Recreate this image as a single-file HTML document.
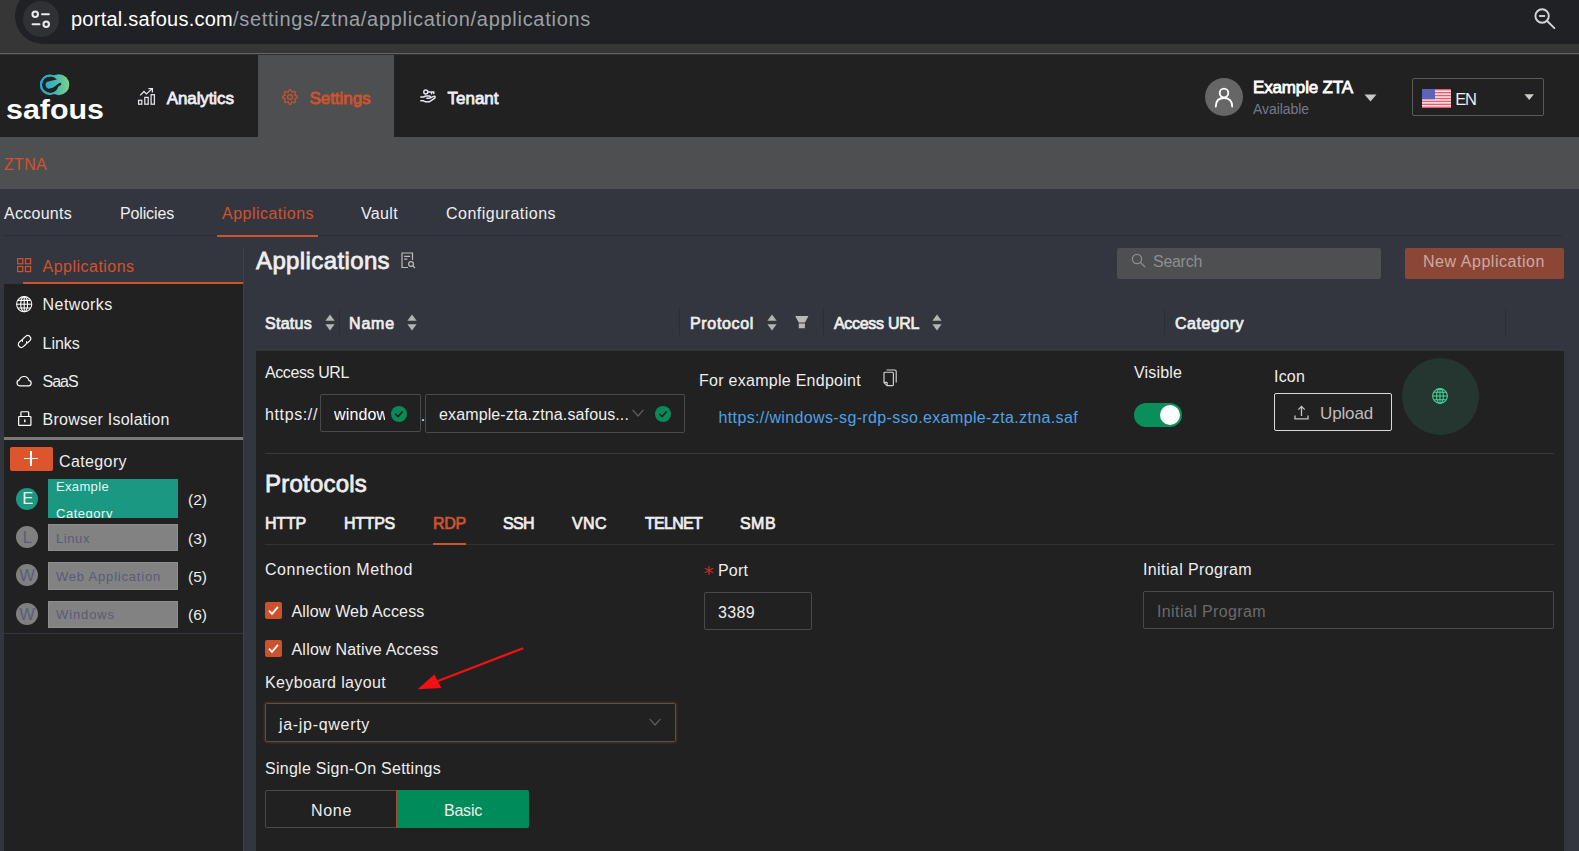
<!DOCTYPE html>
<html lang="en"><head><meta charset="utf-8"><title>Safous - Applications</title>
<style>
html,body{margin:0;padding:0;}
body{width:1579px;height:851px;overflow:hidden;background:#33363f;position:relative;font-family:"Liberation Sans",sans-serif;color:#fff;}
.t{position:absolute;white-space:nowrap;}
.b{position:absolute;box-sizing:border-box;}
svg{position:absolute;overflow:visible;}
</style></head><body>
<div class="b" style="left:0px;top:0px;width:1579px;height:54px;background:#363637;"></div>
<div class="b" style="left:15px;top:-12.4px;width:1700px;height:56px;background:#202124;border-radius:28px;"></div>
<div class="b" style="left:0px;top:53px;width:1579px;height:1px;background:#646464;"></div>
<div class="b" style="left:22.5px;top:1px;width:36px;height:36px;background:#303134;border-radius:50%;"></div>
<svg style="left:29.5px;top:7.5px" width="23" height="23" viewBox="0 0 22 22" fill="none" stroke="#e8eaed" stroke-width="2" stroke-linecap="round"><circle cx="5" cy="6" r="2.6"/><line x1="11.5" y1="6" x2="18" y2="6"/><circle cx="15.5" cy="15.5" r="2.6"/><line x1="2.5" y1="15.5" x2="9" y2="15.5"/></svg>
<span class="t" style="left:71px;top:5px;font-size:20px;line-height:28px;color:#fff;letter-spacing:0.244px;">portal.safous.com</span>
<span class="t" style="left:233px;top:5px;font-size:20px;line-height:28px;color:#9aa0a6;letter-spacing:0.713px;">/settings/ztna/application/applications</span>
<svg style="left:1534px;top:8px" width="22" height="22" viewBox="0 0 22 22" fill="none" stroke="#d4d5d8" stroke-width="1.9"><circle cx="8.1" cy="8" r="6.7"/><line x1="12.9" y1="12.8" x2="20.4" y2="20.1" stroke-linecap="round"/><line x1="5.1" y1="8" x2="11.1" y2="8"/></svg>
<div class="b" style="left:0px;top:54px;width:1579px;height:83px;background:#212121;"></div>
<div class="b" style="left:0px;top:54px;width:1579px;height:1px;background:#2f2f2f;"></div>
<div class="b" style="left:258px;top:55px;width:136px;height:82px;background:#4e4f51;"></div>
<svg style="left:38px;top:72px" width="34" height="26" viewBox="0 0 34 26"><defs><linearGradient id="lg" gradientUnits="userSpaceOnUse" x1="3" y1="0" x2="31" y2="0"><stop offset="0" stop-color="#1fa6d2"/><stop offset="0.45" stop-color="#3db6b4"/><stop offset="1" stop-color="#82d088"/></linearGradient></defs><circle cx="20.8" cy="12.7" r="10.5" fill="url(#lg)"/><circle cx="12.2" cy="12.7" r="9.3" fill="#212121" stroke="url(#lg)" stroke-width="2"/><path d="M11.2 13 L20.5 10.8" stroke="url(#lg)" stroke-width="7.2" stroke-linecap="round"/><path d="M10.4 18.2 C15.2 19.6 17.6 14.2 22 12.1" fill="none" stroke="#212121" stroke-width="2.5" stroke-linecap="round"/><path d="M12.2 22 A9.3 9.3 0 0 1 12.2 3.4" fill="none" stroke="url(#lg)" stroke-width="2"/></svg>
<span class="t" style="left:5.9px;top:91.7px;font-size:27px;line-height:36px;color:#fff;font-weight:700;transform:scaleX(1.125);transform-origin:0 50%;">safous</span>
<svg style="left:138px;top:88px" width="17" height="17" viewBox="0 0 17 17" fill="none" stroke="#e6e6ee" stroke-width="1.25"><rect x="0.6" y="12.3" width="3.2" height="3.9"/><rect x="6.8" y="9.4" width="3.4" height="6.8"/><rect x="13.1" y="6.7" width="3.3" height="9.5"/><path d="M2.2 7.4 L6 3.5 L8.4 6 L14 0.9 M10.4 0.7 H14.4 V4.6"/></svg>
<span class="t" style="left:166.8px;top:86.5px;font-size:17px;line-height:24px;color:#eeeef6;-webkit-text-stroke:0.77px #eeeef6;letter-spacing:-0.114px;">Analytics</span>
<svg style="left:282px;top:89px" width="16" height="16" viewBox="0 0 24 24" fill="none" stroke="#cf532e" stroke-width="1.8" stroke-linejoin="round"><circle cx="12" cy="12" r="3.6"/><path d="M19.4 15a1.65 1.65 0 0 0 .33 1.82l.06.06a2 2 0 1 1-2.83 2.83l-.06-.06a1.65 1.65 0 0 0-1.82-.33 1.65 1.65 0 0 0-1 1.51V21a2 2 0 1 1-4 0v-.09A1.65 1.65 0 0 0 9 19.4a1.65 1.65 0 0 0-1.82.33l-.06.06a2 2 0 1 1-2.83-2.83l.06-.06a1.65 1.65 0 0 0 .33-1.82 1.65 1.65 0 0 0-1.51-1H3a2 2 0 1 1 0-4h.09A1.65 1.65 0 0 0 4.6 9a1.65 1.65 0 0 0-.33-1.82l-.06-.06a2 2 0 1 1 2.83-2.83l.06.06a1.65 1.65 0 0 0 1.82.33H9a1.65 1.65 0 0 0 1-1.51V3a2 2 0 1 1 4 0v.09a1.65 1.65 0 0 0 1 1.51 1.65 1.65 0 0 0 1.82-.33l.06-.06a2 2 0 1 1 2.83 2.83l-.06.06a1.65 1.65 0 0 0-.33 1.82V9a1.65 1.65 0 0 0 1.51 1H21a2 2 0 1 1 0 4h-.09a1.65 1.65 0 0 0-1.51 1z"/></svg>
<span class="t" style="left:309.5px;top:86.5px;font-size:17px;line-height:24px;color:#cf532e;-webkit-text-stroke:0.77px #cf532e;letter-spacing:-0.053px;">Settings</span>
<svg style="left:419.5px;top:88.5px" width="16" height="16" viewBox="0 0 16 16" fill="none" stroke="#e6e6ee" stroke-width="1.45" stroke-linecap="round" stroke-linejoin="round"><circle cx="5.8" cy="3" r="2"/><path d="M7.8 3 H14 M11.6 3 V4.8 M13.8 3 V4.6"/><path d="M0.8 8 H3.6 L5.8 7 H9.4 C10.7 7 10.7 9.2 9.4 9.2 H6.8 M9.8 9 L13.8 7.4 C15.2 7 15.7 8.6 14.5 9.3 L9.2 12.8 H5.4 L3.6 11.8 H0.8"/></svg>
<span class="t" style="left:447.5px;top:86.5px;font-size:17px;line-height:24px;color:#eeeef6;-webkit-text-stroke:0.77px #eeeef6;letter-spacing:-0.007px;">Tenant</span>
<div class="b" style="left:1205.3px;top:78px;width:38px;height:38px;background:#666666;border-radius:50%;"></div>
<svg style="left:1213.3px;top:86px" width="22" height="22" viewBox="0 0 22 22" fill="none" stroke="#fff" stroke-width="1.8" stroke-linecap="round"><circle cx="11" cy="7" r="4.3"/><path d="M2.8 20.5 C2.8 14.5 6.5 12 11 12 C15.5 12 19.2 14.5 19.2 20.5"/></svg>
<span class="t" style="left:1253px;top:76px;font-size:17px;line-height:24px;color:#fff;-webkit-text-stroke:0.77px #fff;letter-spacing:-0.156px;">Example ZTA</span>
<span class="t" style="left:1253px;top:99px;font-size:14px;line-height:20px;color:#77778c;letter-spacing:-0.063px;">Available</span>
<svg style="left:1364px;top:94px" width="13" height="8" viewBox="0 0 13 8"><path d="M0.5 0.5 H12.5 L6.5 7.5 Z" fill="#c8c8c8"/></svg>
<div class="b" style="left:1412px;top:78px;width:132px;height:38px;border:1px solid #5a5a5a;border-radius:2px;"></div>
<svg style="left:1422px;top:88.5px" width="29" height="19" viewBox="0 0 29 19"><rect width="29" height="19" rx="1.5" fill="#f2f2f2"/><rect y="0" width="29" height="1.46154" fill="#f2566a"/><rect y="2.92308" width="29" height="1.46154" fill="#f2566a"/><rect y="5.84615" width="29" height="1.46154" fill="#f2566a"/><rect y="8.76923" width="29" height="1.46154" fill="#f2566a"/><rect y="11.6923" width="29" height="1.46154" fill="#f2566a"/><rect y="14.6154" width="29" height="1.46154" fill="#f2566a"/><rect y="17.5385" width="29" height="1.46154" fill="#f2566a"/><rect width="13" height="10.3" fill="#5f63b4"/></svg>
<span class="t" style="left:1455.2px;top:87.5px;font-size:16.5px;line-height:23px;color:#f0f0f0;letter-spacing:-1.211px;">EN</span>
<svg style="left:1524px;top:94px" width="10.4" height="6.4" viewBox="0 0 11 7"><path d="M0.3 0.3 H10.7 L5.5 6.7 Z" fill="#cfccc6"/></svg>
<div class="b" style="left:0px;top:137px;width:1579px;height:52px;background:#4e4f51;"></div>
<span class="t" style="left:4px;top:154px;font-size:16px;line-height:22px;color:#cf532e;letter-spacing:0.306px;">ZTNA</span>
<div class="b" style="left:4px;top:235px;width:1558px;height:1px;background:#2a2c33;"></div>
<span class="t" style="left:4px;top:203px;font-size:16px;line-height:22px;color:#eeeeee;letter-spacing:0.273px;">Accounts</span>
<span class="t" style="left:120px;top:203px;font-size:16px;line-height:22px;color:#eeeeee;letter-spacing:-0.142px;">Policies</span>
<span class="t" style="left:222px;top:203px;font-size:16px;line-height:22px;color:#cf532e;letter-spacing:0.477px;">Applications</span>
<span class="t" style="left:361px;top:203px;font-size:16px;line-height:22px;color:#eeeeee;letter-spacing:0.344px;">Vault</span>
<span class="t" style="left:446px;top:203px;font-size:16px;line-height:22px;color:#eeeeee;letter-spacing:0.488px;">Configurations</span>
<div class="b" style="left:217px;top:235px;width:101px;height:2px;background:#cf532e;"></div>
<div class="b" style="left:243px;top:248px;width:1px;height:700px;background:#3f4147;"></div>
<div class="b" style="left:4px;top:284px;width:239px;height:600px;background:#212121;"></div>
<div class="b" style="left:23px;top:282px;width:220px;height:2px;background:#cf532e;"></div>
<svg style="left:17.1px;top:258px" width="14.3" height="14.3" viewBox="0 0 14.3 14.3" fill="none" stroke="#cf532e" stroke-width="1.25"><rect x="0.65" y="0.65" width="5.1" height="5.1"/><rect x="8.5" y="0.65" width="5.1" height="5.1"/><rect x="0.65" y="8.5" width="5.1" height="5.1"/><rect x="8.5" y="8.5" width="5.1" height="5.1"/></svg>
<span class="t" style="left:42.6px;top:256px;font-size:16px;line-height:22px;color:#cf532e;letter-spacing:0.477px;">Applications</span>
<svg style="left:15.9px;top:295.6px" width="16.4" height="16.4" viewBox="0 0 16 16" fill="none" stroke="#fff" stroke-width="1.05"><circle cx="8" cy="8" r="7.4"/><ellipse cx="8" cy="8" rx="3.4" ry="7.4"/><line x1="8" y1="0.6" x2="8" y2="15.4"/><line x1="0.6" y1="8" x2="15.4" y2="8"/><path d="M1.6 4.3 H14.4 M1.6 11.7 H14.4"/></svg>
<span class="t" style="left:42.6px;top:294px;font-size:16px;line-height:22px;color:#eeeeee;letter-spacing:0.415px;">Networks</span>
<svg style="left:17px;top:333.8px" width="15" height="15" viewBox="0 0 15 15" fill="none" stroke="#fff" stroke-width="1.15" stroke-linecap="round"><g transform="rotate(-42 7.5 7.5)"><path d="M6.4 4.5 H3.2 a3 3 0 0 0 0 6 H6.4 a3 3 0 0 0 2.6-1.5"/><path d="M8.6 10.5 H11.8 a3 3 0 0 0 0-6 H8.6 a3 3 0 0 0-2.6 1.5"/></g></svg>
<span class="t" style="left:42.6px;top:333px;font-size:16px;line-height:22px;color:#eeeeee;letter-spacing:-0.070px;">Links</span>
<svg style="left:16.2px;top:374.8px" width="16.4" height="11.6" viewBox="0 0 17 12" fill="none" stroke="#fff" stroke-width="1.2" stroke-linejoin="round"><path d="M4 11.3 a3.2 3.2 0 0 1-0.5-6.3 a5.1 5.1 0 0 1 9.8 0.5 a2.95 2.95 0 0 1 0.1 5.8 z"/></svg>
<span class="t" style="left:42.6px;top:371px;font-size:16px;line-height:22px;color:#eeeeee;letter-spacing:-1.036px;">SaaS</span>
<svg style="left:17.6px;top:411.2px" width="13.6" height="15.2" viewBox="0 0 14 15.5" fill="none" stroke="#fff" stroke-width="1.25"><rect x="0.7" y="5.6" width="12.6" height="9.2" rx="0.6"/><path d="M3 5.6 V1.6 a0.9 0.9 0 0 1 0.9-0.9 H10.1 a0.9 0.9 0 0 1 0.9 0.9 V5.6"/><line x1="7" y1="8.6" x2="7" y2="11.6" stroke-width="1.5"/></svg>
<span class="t" style="left:42.6px;top:409px;font-size:16px;line-height:22px;color:#eeeeee;letter-spacing:0.252px;">Browser Isolation</span>
<div class="b" style="left:4px;top:437px;width:239px;height:3px;background:#7a7a7a;"></div>
<div class="b" style="left:10px;top:447px;width:43px;height:23.6px;background:#dd552d;border-radius:2px;"></div>
<div class="b" style="left:24px;top:457.5px;width:14px;height:1.6px;background:#fff;"></div>
<div class="b" style="left:30.2px;top:451px;width:1.6px;height:14.6px;background:#fff;"></div>
<span class="t" style="left:59px;top:451px;font-size:16px;line-height:22px;color:#eeeeee;letter-spacing:0.385px;">Category</span>
<div class="b" style="left:16px;top:487.7px;width:22px;height:22px;background:#1a9882;border-radius:50%;"></div>
<span class="t" style="left:22.2px;top:487px;font-size:16.5px;line-height:23px;color:#eeeeee;">E</span>
<div class="b" style="left:47.5px;top:479px;width:130px;height:39px;background:#1a9882;overflow:hidden;"></div>
<span class="t" style="left:56px;top:478px;font-size:13px;line-height:18px;color:#e8f6f2;letter-spacing:0.346px;">Example</span>
<span class="t" style="left:56px;top:505px;font-size:13px;line-height:18px;color:#e8f6f2;letter-spacing:0.531px;">Category</span>
<div class="b" style="left:47px;top:518px;width:132px;height:3px;background:#212121;"></div>
<span class="t" style="left:188px;top:489px;font-size:15.5px;line-height:22px;color:#eeeeee;letter-spacing:0.018px;">(2)</span>
<div class="b" style="left:16px;top:526.2px;width:22px;height:22px;background:#808080;border-radius:50%;"></div>
<span class="t" style="left:22.7px;top:526px;font-size:16.5px;line-height:23px;color:#5c5c78;">L</span>
<div class="b" style="left:47.5px;top:523.5px;width:130px;height:27px;background:#828282;border:1px solid #8e8e8e;"></div>
<span class="t" style="left:56px;top:529.5px;font-size:13px;line-height:18px;color:#5a5a7a;letter-spacing:0.584px;">Linux</span>
<span class="t" style="left:188px;top:528px;font-size:15.5px;line-height:22px;color:#eeeeee;letter-spacing:0.018px;">(3)</span>
<div class="b" style="left:16px;top:563.8px;width:22px;height:22px;background:#808080;border-radius:50%;"></div>
<span class="t" style="left:19.3px;top:563.6px;font-size:16.5px;line-height:23px;color:#5c5c78;">W</span>
<div class="b" style="left:47.5px;top:561.5px;width:130px;height:28px;background:#828282;border:1px solid #8e8e8e;"></div>
<span class="t" style="left:56px;top:567.5px;font-size:13px;line-height:18px;color:#5a5a7a;letter-spacing:0.801px;">Web Application</span>
<span class="t" style="left:188px;top:565.5px;font-size:15.5px;line-height:22px;color:#eeeeee;letter-spacing:0.018px;">(5)</span>
<div class="b" style="left:16px;top:603px;width:22px;height:22px;background:#808080;border-radius:50%;"></div>
<span class="t" style="left:19.3px;top:602.8px;font-size:16.5px;line-height:23px;color:#5c5c78;">W</span>
<div class="b" style="left:47.5px;top:600.5px;width:130px;height:27px;background:#828282;border:1px solid #8e8e8e;"></div>
<span class="t" style="left:56px;top:606px;font-size:13px;line-height:18px;color:#5a5a7a;letter-spacing:0.895px;">Windows</span>
<span class="t" style="left:188px;top:604px;font-size:15.5px;line-height:22px;color:#eeeeee;letter-spacing:0.018px;">(6)</span>
<div class="b" style="left:4px;top:633px;width:239px;height:1px;background:#35373e;"></div>
<span class="t" style="left:256px;top:244px;font-size:24px;line-height:34px;color:#eeeeee;-webkit-text-stroke:0.77px #eeeeee;letter-spacing:0.382px;">Applications</span>
<svg style="left:401px;top:252px" width="15" height="17" viewBox="0 0 15 17" fill="none" stroke="#bdbdbd" stroke-width="1.2"><path d="M11.5 8 V1 H1 V15.5 H7"/><path d="M3.2 4.3 H9.2 M3.2 7.2 H6.3"/><circle cx="10" cy="12" r="2.4"/><path d="M11.8 13.8 L14 16"/></svg>
<div class="b" style="left:1117px;top:248px;width:264px;height:31px;background:#4e4f51;border-radius:2px;"></div>
<svg style="left:1131px;top:253px" width="15" height="15" viewBox="0 0 15 15" fill="none" stroke="#8d8e90" stroke-width="1.3"><circle cx="6" cy="6" r="4.6"/><path d="M9.5 9.5 L14 14"/></svg>
<span class="t" style="left:1153px;top:251px;font-size:16px;line-height:22px;color:#8d8e90;letter-spacing:-0.283px;">Search</span>
<div class="b" style="left:1405px;top:248px;width:159px;height:31px;background:#8c4636;border-radius:2px;"></div>
<span class="t" style="left:1423px;top:251px;font-size:16px;line-height:22px;color:#cdaaa0;letter-spacing:0.544px;">New Application</span>
<span class="t" style="left:265px;top:313px;font-size:16px;line-height:22px;color:#eeeeee;-webkit-text-stroke:0.72px #eeeeee;letter-spacing:0.273px;">Status</span>
<svg style="left:325px;top:314px" width="10" height="17" viewBox="0 0 10 17"><path d="M5 0.5 L9.6 6.8 H0.4 Z M5 16.5 L9.6 10.2 H0.4 Z" fill="#b4b4b4"/></svg>
<div class="b" style="left:339px;top:309px;width:1px;height:26px;background:#2b2d34;"></div>
<span class="t" style="left:349px;top:313px;font-size:16px;line-height:22px;color:#eeeeee;-webkit-text-stroke:0.72px #eeeeee;letter-spacing:0.830px;">Name</span>
<svg style="left:407px;top:314px" width="10" height="17" viewBox="0 0 10 17"><path d="M5 0.5 L9.6 6.8 H0.4 Z M5 16.5 L9.6 10.2 H0.4 Z" fill="#b4b4b4"/></svg>
<div class="b" style="left:679px;top:309px;width:1px;height:26px;background:#2b2d34;"></div>
<span class="t" style="left:690px;top:313px;font-size:16px;line-height:22px;color:#eeeeee;-webkit-text-stroke:0.72px #eeeeee;letter-spacing:0.663px;">Protocol</span>
<svg style="left:767px;top:314px" width="10" height="17" viewBox="0 0 10 17"><path d="M5 0.5 L9.6 6.8 H0.4 Z M5 16.5 L9.6 10.2 H0.4 Z" fill="#b4b4b4"/></svg>
<svg style="left:795.4px;top:316.2px" width="13.7" height="12.4" viewBox="0 0 13.7 12.4"><path d="M0.2 0 H13.5 L10 6.4 H3.7 Z M3.8 7.5 H9.9 V12.2 H3.8 Z" fill="#b9b9b9"/></svg>
<div class="b" style="left:823px;top:309px;width:1px;height:26px;background:#2b2d34;"></div>
<span class="t" style="left:834px;top:313px;font-size:16px;line-height:22px;color:#eeeeee;-webkit-text-stroke:0.72px #eeeeee;letter-spacing:-0.303px;">Access URL</span>
<svg style="left:932px;top:314px" width="10" height="17" viewBox="0 0 10 17"><path d="M5 0.5 L9.6 6.8 H0.4 Z M5 16.5 L9.6 10.2 H0.4 Z" fill="#b4b4b4"/></svg>
<div class="b" style="left:1164px;top:309px;width:1px;height:26px;background:#2b2d34;"></div>
<span class="t" style="left:1175px;top:313px;font-size:16px;line-height:22px;color:#eeeeee;-webkit-text-stroke:0.72px #eeeeee;letter-spacing:0.510px;">Category</span>
<div class="b" style="left:1505px;top:309px;width:1px;height:26px;background:#2b2d34;"></div>
<div class="b" style="left:256px;top:351px;width:1308px;height:520px;background:#212121;"></div>
<span class="t" style="left:265px;top:362px;font-size:16px;line-height:22px;color:#eeeeee;letter-spacing:-0.403px;">Access URL</span>
<span class="t" style="left:265px;top:404px;font-size:16px;line-height:22px;color:#eeeeee;letter-spacing:0.622px;">https://</span>
<div class="b" style="left:320px;top:394px;width:101px;height:38px;border:1px solid #4a4a4a;border-radius:2px;overflow:hidden;"></div>
<div class="b" style="left:334px;top:396px;width:51px;height:34px;overflow:hidden;"><span class="t" style="left:0;top:8px;font-size:16px;line-height:22px;letter-spacing:0.15px">windows-sg</span></div>
<svg style="left:390.5px;top:405.5px" width="16" height="16" viewBox="0 0 16 16"><circle cx="8" cy="8" r="8" fill="#0a8a58"/><path d="M4.6 8.2 L7 10.6 L11.4 5.8" fill="none" stroke="#212121" stroke-width="1.6" stroke-linecap="round" stroke-linejoin="round"/></svg>
<span class="t" style="left:420.7px;top:405px;font-size:16px;line-height:22px;color:#eeeeee;">.</span>
<div class="b" style="left:425px;top:394px;width:260px;height:39px;border:1px solid #4a4a4a;border-radius:2px;"></div>
<span class="t" style="left:439px;top:404px;font-size:16px;line-height:22px;color:#eeeeee;letter-spacing:0.125px;">example-zta.ztna.safous...</span>
<svg style="left:632px;top:409px" width="12" height="8" viewBox="0 0 12 8" fill="none" stroke="#5f5f5f" stroke-width="1.2"><path d="M0.6 0.8 L6 7 L11.4 0.8"/></svg>
<svg style="left:655px;top:405.5px" width="16" height="16" viewBox="0 0 16 16"><circle cx="8" cy="8" r="8" fill="#0a8a58"/><path d="M4.6 8.2 L7 10.6 L11.4 5.8" fill="none" stroke="#212121" stroke-width="1.6" stroke-linecap="round" stroke-linejoin="round"/></svg>
<span class="t" style="left:699px;top:370px;font-size:16px;line-height:22px;color:#eeeeee;letter-spacing:0.273px;">For example Endpoint</span>
<svg style="left:882.5px;top:368.5px" width="14" height="18" viewBox="0 0 14 18" fill="none" stroke="#d2d2d2" stroke-width="1.15" stroke-linejoin="round"><path d="M3.6 1 H11.8 a1.4 1.4 0 0 1 1.4 1.4 V13.6"/><path d="M1 4.2 a1 1 0 0 1 1-1 H9.4 a1 1 0 0 1 1 1 V15.6 a1 1 0 0 1-1 1 H4 L1 13.6 Z"/><path d="M1 13.4 H3.4 a0.8 0.8 0 0 1 0.8 0.8 V16.6"/></svg>
<span class="t" style="left:718.5px;top:407px;font-size:16px;line-height:22px;color:#4ea2e6;letter-spacing:0.365px;">https://windows-sg-rdp-sso.example-zta.ztna.saf</span>
<span class="t" style="left:1134px;top:362px;font-size:16px;line-height:22px;color:#eeeeee;letter-spacing:0.165px;">Visible</span>
<div class="b" style="left:1134px;top:403px;width:48px;height:24px;background:#0a8f5b;border-radius:12px;"></div>
<div class="b" style="left:1159.5px;top:405px;width:20px;height:20px;background:#fff;border-radius:50%;"></div>
<span class="t" style="left:1274px;top:366px;font-size:16px;line-height:22px;color:#eeeeee;letter-spacing:0.189px;">Icon</span>
<div class="b" style="left:1274px;top:393px;width:118px;height:38px;border:1px solid #d9d9d9;border-radius:2px;"></div>
<svg style="left:1294px;top:405px" width="15" height="15" viewBox="0 0 15 15" fill="none" stroke="#c4c4c4" stroke-width="1.3"><path d="M1 10.5 V13.8 H14 V10.5"/><path d="M7.5 11 V1.5 M4.3 4.6 L7.5 1.4 L10.7 4.6"/></svg>
<span class="t" style="left:1320px;top:402px;font-size:17px;line-height:24px;color:#bdbdbd;letter-spacing:-0.146px;">Upload</span>
<div class="b" style="left:1401.5px;top:358px;width:77px;height:77px;background:#25352f;border-radius:50%;"></div>
<svg style="left:1432.1px;top:388.4px" width="16" height="16" viewBox="0 0 16 16" fill="none" stroke="#46d49c" stroke-width="1.05"><circle cx="8" cy="8" r="7.4"/><ellipse cx="8" cy="8" rx="3.4" ry="7.4"/><line x1="8" y1="0.6" x2="8" y2="15.4"/><line x1="0.6" y1="8" x2="15.4" y2="8"/><path d="M1.6 4.3 H14.4 M1.6 11.7 H14.4"/></svg>
<div class="b" style="left:265px;top:453px;width:1289px;height:1px;background:#3a3a3a;"></div>
<span class="t" style="left:265px;top:467px;font-size:24px;line-height:34px;color:#eeeeee;-webkit-text-stroke:0.77px #eeeeee;letter-spacing:0.217px;">Protocols</span>
<span class="t" style="left:265px;top:513px;font-size:16px;line-height:22px;color:#eeeeee;-webkit-text-stroke:0.72px #eeeeee;letter-spacing:-0.194px;">HTTP</span>
<span class="t" style="left:344px;top:513px;font-size:16px;line-height:22px;color:#eeeeee;-webkit-text-stroke:0.72px #eeeeee;letter-spacing:-0.289px;">HTTPS</span>
<span class="t" style="left:433px;top:513px;font-size:16px;line-height:22px;color:#cf532e;-webkit-text-stroke:0.72px #cf532e;letter-spacing:-0.261px;">RDP</span>
<span class="t" style="left:503px;top:513px;font-size:16px;line-height:22px;color:#eeeeee;-webkit-text-stroke:0.72px #eeeeee;letter-spacing:-0.633px;">SSH</span>
<span class="t" style="left:572px;top:513px;font-size:16px;line-height:22px;color:#eeeeee;-webkit-text-stroke:0.72px #eeeeee;letter-spacing:0.406px;">VNC</span>
<span class="t" style="left:645px;top:513px;font-size:16px;line-height:22px;color:#eeeeee;-webkit-text-stroke:0.72px #eeeeee;letter-spacing:-0.724px;">TELNET</span>
<span class="t" style="left:740px;top:513px;font-size:16px;line-height:22px;color:#eeeeee;-webkit-text-stroke:0.72px #eeeeee;letter-spacing:0.442px;">SMB</span>
<div class="b" style="left:265px;top:544px;width:1289px;height:1px;background:#333333;"></div>
<div class="b" style="left:433px;top:543px;width:33px;height:2px;background:#cf532e;"></div>
<span class="t" style="left:265px;top:559px;font-size:16px;line-height:22px;color:#eeeeee;letter-spacing:0.543px;">Connection Method</span>
<svg style="left:265px;top:602px" width="17" height="17" viewBox="0 0 17 17"><rect width="17" height="17" rx="2" fill="#cd522c"/><path d="M4 8.6 L7 11.8 L13 4.8" fill="none" stroke="#fff" stroke-width="1.8"/></svg>
<span class="t" style="left:291.5px;top:601px;font-size:16px;line-height:22px;color:#eeeeee;letter-spacing:0.161px;">Allow Web Access</span>
<svg style="left:265px;top:640px" width="17" height="17" viewBox="0 0 17 17"><rect width="17" height="17" rx="2" fill="#cd522c"/><path d="M4 8.6 L7 11.8 L13 4.8" fill="none" stroke="#fff" stroke-width="1.8"/></svg>
<span class="t" style="left:291.5px;top:639px;font-size:16px;line-height:22px;color:#eeeeee;letter-spacing:0.202px;">Allow Native Access</span>
<span class="t" style="left:265px;top:672px;font-size:16px;line-height:22px;color:#eeeeee;letter-spacing:0.358px;">Keyboard layout</span>
<div class="b" style="left:265px;top:703px;width:411px;height:39px;border:1px solid #565051;border-radius:2px;box-shadow:0 0 0 1.5px rgba(214,84,45,0.16);"></div>
<span class="t" style="left:279px;top:714px;font-size:16px;line-height:22px;color:#eeeeee;letter-spacing:0.692px;">ja-jp-qwerty</span>
<svg style="left:649px;top:718px" width="12" height="8" viewBox="0 0 12 8" fill="none" stroke="#5f5f5f" stroke-width="1.2"><path d="M0.6 0.8 L6 7 L11.4 0.8"/></svg>
<span class="t" style="left:265px;top:758px;font-size:16px;line-height:22px;color:#eeeeee;letter-spacing:0.266px;">Single Sign-On Settings</span>
<div class="b" style="left:265px;top:790px;width:133px;height:38px;border:1px solid #4a4a4a;border-radius:2px 0 0 2px;"></div>
<span class="t" style="left:311px;top:800px;font-size:16px;line-height:22px;color:#eeeeee;letter-spacing:0.687px;">None</span>
<div class="b" style="left:397px;top:790px;width:132px;height:38px;background:#008c5a;border-radius:0 2px 2px 0;"></div>
<span class="t" style="left:444px;top:800px;font-size:16px;line-height:22px;color:#eeeeee;letter-spacing:-0.225px;">Basic</span>
<div class="b" style="left:396px;top:790px;width:1px;height:38px;background:#a9482d;"></div>
<span class="t" style="left:702.7px;top:557.6px;font-size:20px;line-height:30px;color:#c92a2a;font-family:'DejaVu Sans Mono',monospace">*</span>
<span class="t" style="left:718px;top:560px;font-size:16px;line-height:22px;color:#eeeeee;letter-spacing:0.164px;">Port</span>
<div class="b" style="left:704px;top:592px;width:108px;height:38px;border:1px solid #4a4a4a;border-radius:2px;"></div>
<span class="t" style="left:718px;top:602px;font-size:16px;line-height:22px;color:#eeeeee;letter-spacing:0.351px;">3389</span>
<span class="t" style="left:1143px;top:559px;font-size:16px;line-height:22px;color:#eeeeee;letter-spacing:0.390px;">Initial Program</span>
<div class="b" style="left:1143px;top:591px;width:411px;height:38px;border:1px solid #4a4a4a;border-radius:2px;"></div>
<span class="t" style="left:1157px;top:601px;font-size:16px;line-height:22px;color:#6a6a6a;letter-spacing:0.390px;">Initial Program</span>
<svg style="left:0;top:0" width="1579" height="851" viewBox="0 0 1579 851"><line x1="523.3" y1="648.2" x2="436" y2="681.8" stroke="#f01212" stroke-width="2.3"/><path d="M417.6 689.3 L434.3 674.4 L441.4 688.1 Z" fill="#f01212"/></svg>
</body></html>
